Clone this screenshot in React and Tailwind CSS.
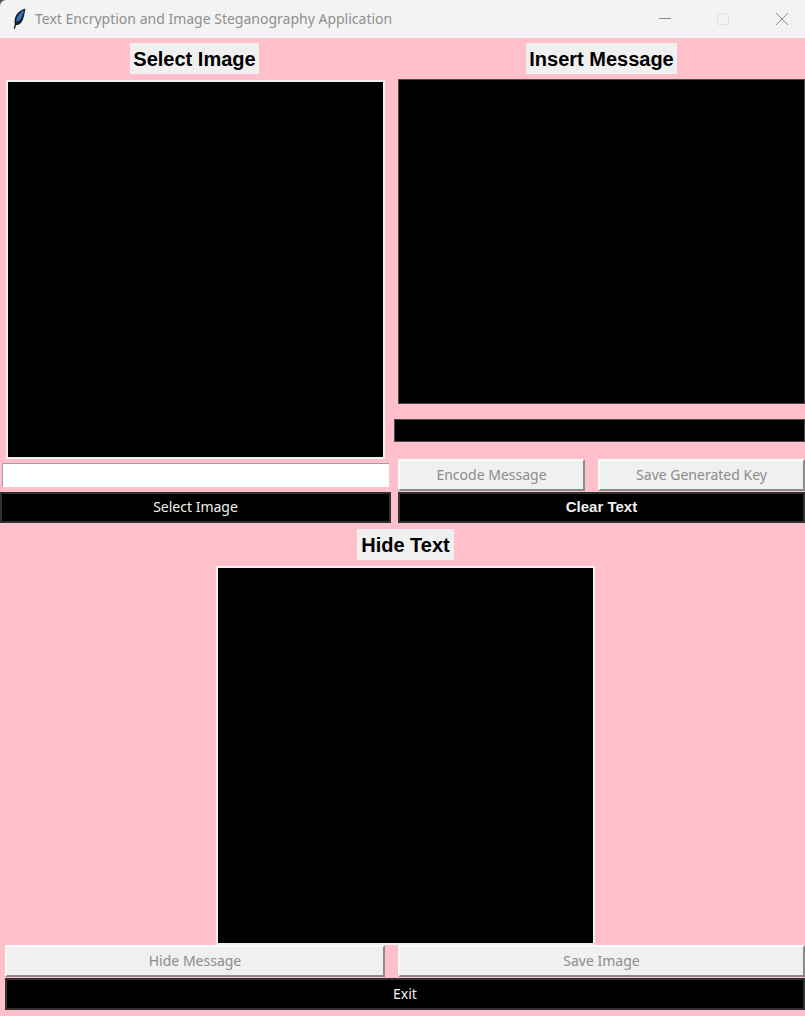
import React from 'react';

const sans = "font-['Noto_Sans','Open_Sans',sans-serif]";

// Tk style raised button, grey face
function GreyButton({ label, className }) {
  return (
    <button className={`flex items-center justify-center bg-[#f0f0f0] border-2 border-t-[#fbfbfb] border-l-[#fbfbfb] border-r-[#8a8a8a] border-b-[#8a8a8a] pb-[2px] text-[14px] text-[#8c8c8c] ${sans} ${className}`}>
      {label}
    </button>
  );
}

function BlackButton({ label, className, bold }) {
  return (
    <button className={`flex items-center justify-center bg-black border-2 border-[#303030] text-[#f0f0f0] ${bold ? "font-['Liberation_Sans',sans-serif] font-bold text-[15px]" : `pb-[2px] text-[14px] ${sans}`} ${className}`}>
      {label}
    </button>
  );
}

function Heading({ label, className }) {
  return (
    <div className={`flex h-[31px] items-center justify-center bg-[#f0f0f0] font-['Liberation_Sans',sans-serif] text-[20px] font-bold text-black ${className}`}>
      {label}
    </div>
  );
}

function Feather() {
  return (
    <svg width="16" height="24" viewBox="0 0 16 24">
      <path d="M14.5 1.5C10 2.5 5.5 6 4 11c-.6 2.2-.6 4.5-.2 6.2L2.6 21.5l1.2.6 1.4-4c3 .2 5.6-2.2 7-6.3 1-3 1.8-7 2.3-10.8z" fill="#1f1f24" />
      <path d="M13.2 3.2C10 4.6 7 7.5 5.8 11.2c-.4 1.3-.5 2.6-.4 3.8 2.6-.6 4.6-2.8 5.8-6 .7-1.8 1.4-3.9 2-5.8z" fill="#2f74c8" />
    </svg>
  );
}

export default function App() {
  return (
    <div className="h-[1016px] w-[805px] overflow-hidden bg-[#ffc0cb]">
      {/* Title bar */}
      <div className="bg-[#555555]">
        <div className="flex h-[38px] items-center rounded-tl-[6px] bg-[#f3f3f3]">
          <div className="ml-[11px] flex w-[24px] items-center">
            <Feather />
          </div>
          <span className={`pb-[2px] text-[14px] text-[#8f8f8f] ${sans}`}>
            Text Encryption and Image Steganography Application
          </span>
          <div className="ml-auto flex items-center pb-[1px]">
            <div className="mr-[46px] h-px w-[12px] bg-[#8a8a8a]" />
            <div className="mr-[46px] h-[12px] w-[12px] rounded-[2px] border border-[#e2e2e2]" />
            <svg width="14" height="14" viewBox="0 0 14 14" className="mr-[16px]">
              <path d="M1 1l12 12M13 1L1 13" stroke="#8a8a8a" strokeWidth="1" fill="none" />
            </svg>
          </div>
        </div>
      </div>

      {/* Top section */}
      <div className="flex">
        <div className="flex w-[391px] flex-col">
          <Heading label="Select Image" className="mt-[5px] ml-[130px] w-[129px]" />
          <div className="mt-[6px] ml-[6px] h-[379px] w-[379px] border-2 border-[#f0f0f0] bg-black" />
          <div className="mt-[4px] ml-[2px] h-[24px] w-[387px] border-t border-l border-t-[#a0a0a0] border-l-[#a0a0a0] bg-white" />
          <BlackButton label="Select Image" className="mt-[5px] h-[31px] w-[391px]" />
        </div>
        <div className="ml-[7px] flex w-[407px] flex-col">
          <Heading label="Insert Message" className="mt-[5px] ml-[128px] w-[151px]" />
          <div className="mt-[5px] h-[325px] border border-[#4a4a4a] bg-black" />
          <div className="mt-[15px] -ml-[4px] h-[23px] w-[411px] border border-[#4a4a4a] bg-black" />
          <div className="mt-[17px] flex gap-[13px]">
            <GreyButton label="Encode Message" className="h-[32px] w-[187px]" />
            <GreyButton label="Save Generated Key" className="h-[32px] w-[207px]" />
          </div>
          <BlackButton bold label="Clear Text" className="mt-[1px] h-[31px] w-[407px]" />
        </div>
      </div>

      {/* Bottom section */}
      <Heading label="Hide Text" className="mt-[6px] ml-[357px] w-[97px]" />
      <div className="mt-[6px] ml-[216px] h-[379px] w-[379px] border-2 border-[#f0f0f0] bg-black" />
      <div className="ml-[5px] flex gap-[13px]">
        <GreyButton label="Hide Message" className="h-[32px] w-[380px]" />
        <GreyButton label="Save Image" className="h-[32px] w-[407px]" />
      </div>
      <BlackButton label="Exit" className="mt-[1px] ml-[5px] h-[32px] w-[800px]" />
    </div>
  );
}
